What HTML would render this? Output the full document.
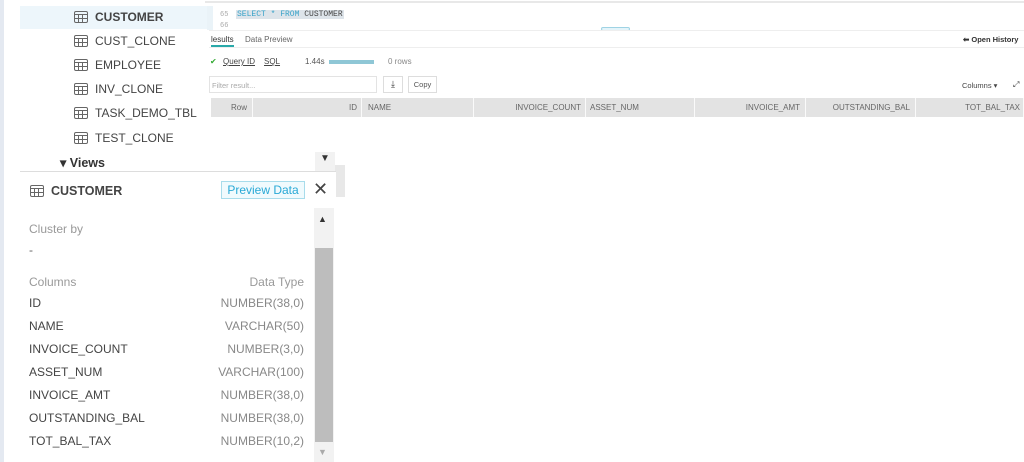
<!DOCTYPE html>
<html><head><style>
*{margin:0;padding:0;box-sizing:border-box}
body{width:1024px;height:462px;overflow:hidden;background:#fff;font-family:"Liberation Sans",sans-serif;position:relative;color:#333}
.a{position:absolute;white-space:nowrap}
.ti{position:absolute;width:14px;height:12px;border:1.5px solid #666;border-radius:2px}
.ti:before{content:"";position:absolute;left:0;right:0;top:2px;height:3px;border-top:1.5px solid #666;border-bottom:1px solid #666}
.ti:after{content:"";position:absolute;top:2px;bottom:0;left:3px;width:3px;border-left:1px solid #666;border-right:1px solid #666}
.tr{font-size:12px;color:#444}
.th{position:absolute;top:98px;height:19px;background:#e3e3e3;font-size:8px;color:#666;line-height:19px;border-right:1px solid #fafafa}
.cn{font-size:12px;color:#444;left:29px}
.ct{font-size:12px;color:#888;right:720px}
</style></head><body>
<div class="a" style="left:0;top:0;width:4px;height:462px;background:#e4e9f1"></div>
<div class="a" style="left:205px;top:1px;width:819px;height:2px;background:#e8e8e8"></div>
<div class="a" style="left:20px;top:6px;width:187px;height:23px;background:#edf6fb"></div>
<div class="ti" style="left:74px;top:11px"></div><div class="a tr" style="left:95px;top:10px;font-weight:bold">CUSTOMER</div>
<div class="ti" style="left:74px;top:35px"></div><div class="a tr" style="left:95px;top:34px">CUST_CLONE</div>
<div class="ti" style="left:74px;top:59px"></div><div class="a tr" style="left:95px;top:58px">EMPLOYEE</div>
<div class="ti" style="left:74px;top:83px"></div><div class="a tr" style="left:95px;top:82px">INV_CLONE</div>
<div class="ti" style="left:74px;top:107px"></div><div class="a tr" style="left:95px;top:106px">TASK_DEMO_TBL</div>
<div class="ti" style="left:74px;top:132px"></div><div class="a tr" style="left:95px;top:131px">TEST_CLONE</div>
<div class="a" style="left:60px;top:155px;font-size:12.5px;font-weight:bold;color:#333">▾ Views</div>
<div class="a" style="left:315px;top:152px;width:20px;height:22px;background:#f2f2f2;font-size:10px;color:#333;text-align:center;line-height:14px">▼</div>
<div class="a" style="left:335px;top:165px;width:10px;height:32px;background:#e8e8e8"></div>
<div class="a" style="left:20px;top:171px;width:316px;height:291px;background:#fff;border-top:1px solid #ddd"></div>
<div class="ti" style="left:30px;top:185px"></div>
<div class="a" style="left:51px;top:184px;font-size:12.5px;font-weight:bold;color:#444">CUSTOMER</div>
<div class="a" style="left:221px;top:181px;width:84px;height:18px;border:1px solid #a8dceb;background:#f0fafd;color:#29a9d6;font-size:12px;text-align:center;line-height:16px">Preview Data</div>
<div class="a" style="left:313px;top:179px;font-size:18px;color:#444">✕</div>
<div class="a" style="left:314px;top:208px;width:20px;height:254px;background:#f2f2f2"></div>
<div class="a" style="left:315px;top:248px;width:18px;height:194px;background:#bdbdbd"></div>
<div class="a" style="left:318px;top:214px;font-size:9px;color:#333">▲</div>
<div class="a" style="left:318px;top:447px;font-size:9px;color:#aaa">▼</div>
<div class="a" style="left:29px;top:222px;font-size:12px;color:#999">Cluster by</div>
<div class="a" style="left:29px;top:243px;font-size:12px;color:#666">-</div>
<div class="a" style="left:29px;top:275px;font-size:12px;color:#999">Columns</div>
<div class="a" style="right:720px;top:275px;font-size:12px;color:#999">Data Type</div>
<div class="a cn" style="top:296px">ID</div><div class="a ct" style="top:296px">NUMBER(38,0)</div>
<div class="a cn" style="top:319px">NAME</div><div class="a ct" style="top:319px">VARCHAR(50)</div>
<div class="a cn" style="top:342px">INVOICE_COUNT</div><div class="a ct" style="top:342px">NUMBER(3,0)</div>
<div class="a cn" style="top:365px">ASSET_NUM</div><div class="a ct" style="top:365px">VARCHAR(100)</div>
<div class="a cn" style="top:388px">INVOICE_AMT</div><div class="a ct" style="top:388px">NUMBER(38,0)</div>
<div class="a cn" style="top:411px">OUTSTANDING_BAL</div><div class="a ct" style="top:411px">NUMBER(38,0)</div>
<div class="a cn" style="top:434px">TOT_BAL_TAX</div><div class="a ct" style="top:434px">NUMBER(10,2)</div>
<div class="a" style="left:207px;top:6px;width:6px;height:24px;background:#eaf3f8"></div>
<div class="a" style="left:220px;top:11px;font-family:'Liberation Mono',monospace;font-size:7px;color:#aaa">65</div>
<div class="a" style="left:220px;top:22px;font-family:'Liberation Mono',monospace;font-size:7px;color:#aaa">66</div>
<div class="a" style="left:236px;top:10px;font-family:'Liberation Mono',monospace;font-size:8px;background:#dde4ea;color:#3aa3c9;padding:0 1px">SELECT * FROM <span style="color:#444">CUSTOMER</span></div>
<div class="a" style="left:601px;top:27px;width:29px;height:4px;border:1px solid #9fd3e4;border-radius:3px;background:#e4f4fa"></div>
<div class="a" style="left:209px;top:30px;width:815px;height:1px;background:#eee"></div>
<div class="a" style="left:211px;top:35px;font-size:8px;color:#333">lesults</div>
<div class="a" style="left:211px;top:45px;width:23px;height:2px;background:#29a9a9"></div>
<div class="a" style="left:245px;top:35px;font-size:8px;color:#666">Data Preview</div>
<div class="a" style="left:963px;top:35px;font-size:7.5px;color:#333;font-weight:bold">⬅ Open History</div>
<div class="a" style="left:209px;top:47px;width:815px;height:1px;background:#eee"></div>
<div class="a" style="left:210px;top:57px;font-size:8px;color:#3a3">✔</div>
<div class="a" style="left:223px;top:57px;font-size:8px;color:#444;text-decoration:underline">Query ID</div>
<div class="a" style="left:264px;top:57px;font-size:8px;color:#444;text-decoration:underline">SQL</div>
<div class="a" style="left:305px;top:57px;font-size:8px;color:#555">1.44s</div>
<div class="a" style="left:329px;top:60px;width:45px;height:4px;background:#8fc7d6"></div>
<div class="a" style="left:388px;top:57px;font-size:8px;color:#888">0 rows</div>
<div class="a" style="left:209px;top:76px;width:168px;height:17px;border:1px solid #e3e3e3;font-size:7.5px;color:#aaa;padding:4px 2px">Filter result...</div>
<div class="a" style="left:383px;top:76px;width:20px;height:17px;border:1px solid #ddd;font-size:9px;text-align:center;line-height:15px">⤓</div>
<div class="a" style="left:408px;top:76px;width:29px;height:17px;border:1px solid #ddd;font-size:7.5px;color:#555;text-align:center;line-height:15px">Copy</div>
<div class="a" style="left:962px;top:81px;font-size:7.5px;color:#444">Columns ▾</div>
<div class="a" style="left:1013px;top:80px;font-size:8px;color:#333">⤢</div>
<div class="th" style="left:211px;width:42px;text-align:right;padding-right:5px">Row</div>
<div class="th" style="left:253px;width:109px;text-align:right;padding-right:4px">ID</div>
<div class="th" style="left:362px;width:112px;padding-left:6px">NAME</div>
<div class="th" style="left:474px;width:112px;text-align:right;padding-right:4px">INVOICE_COUNT</div>
<div class="th" style="left:586px;width:109px;padding-left:4px">ASSET_NUM</div>
<div class="th" style="left:695px;width:111px;text-align:right;padding-right:5px">INVOICE_AMT</div>
<div class="th" style="left:806px;width:110px;text-align:right;padding-right:5px">OUTSTANDING_BAL</div>
<div class="th" style="left:916px;width:108px;text-align:right;padding-right:3px">TOT_BAL_TAX</div>
</body></html>
